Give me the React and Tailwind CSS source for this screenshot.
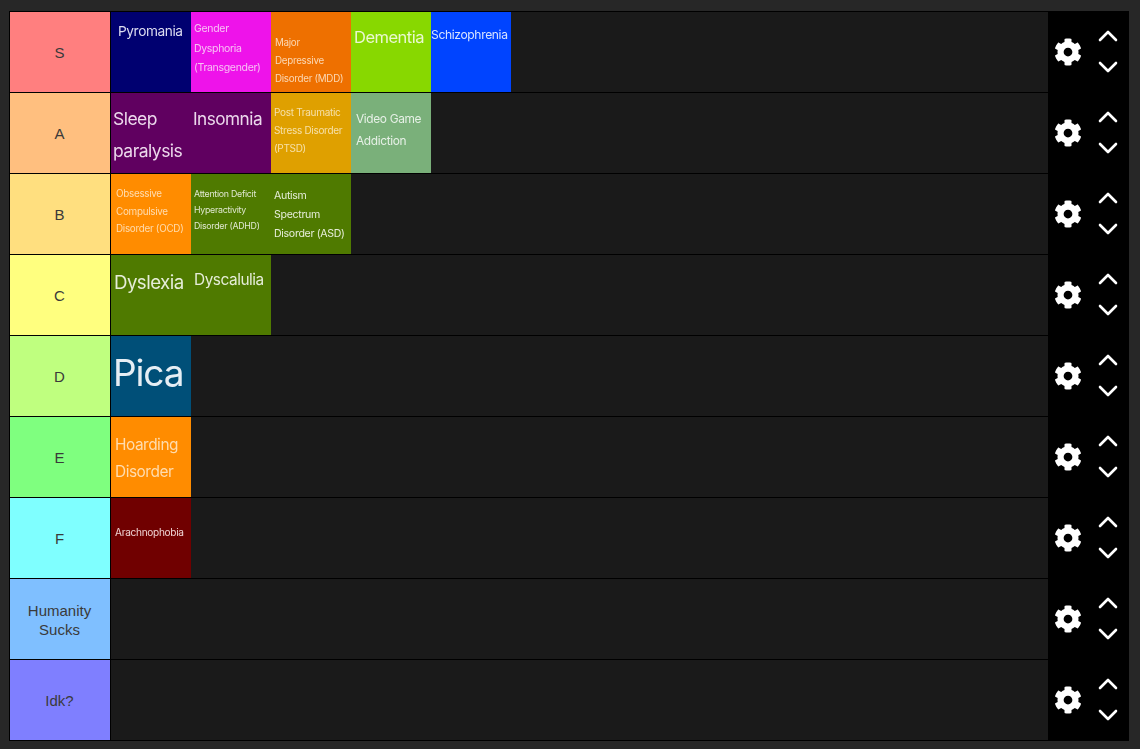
import React from "react";
import { FaCog } from "react-icons/fa";

const Tile = ({ bg, cls, lines }) => (
  <div className={`w-20 h-20 shrink-0 overflow-hidden whitespace-nowrap tracking-[-0.03em] ${bg} ${cls}`}>
    <div className="blur-[0.3px]">
      {lines.map((l) => (
        <div key={l}>{l}</div>
      ))}
    </div>
  </div>
);

const rows = [
  { label: ["S"], bg: "bg-[#ff7f7f]", tiles: [
    { bg: "bg-[#000070]", cls: "pl-[7px] pt-[10px] text-[13.7px] leading-[18px] text-[#dcdcf0]", lines: ["Pyromania"] },
    { bg: "bg-[#ee13ea]", cls: "pl-[3px] pt-[7px] text-[10.5px] leading-[19.5px] text-[#f8c0f4]", lines: ["Gender", "Dysphoria", "(Transgender)"] },
    { bg: "bg-[#ee7000]", cls: "pl-[4px] pt-[22px] text-[9.8px] leading-[18px] text-[#fbd8b4]", lines: ["Major", "Depressive", "Disorder (MDD)"] },
    { bg: "bg-[#88d800]", cls: "pl-[3px] pt-[12px] text-[16.5px] leading-[26px] text-[#eaf8d0]", lines: ["Dementia"] },
    { bg: "bg-[#0044ff]", cls: "pl-0 pt-[14px] text-[12.1px] leading-[18px] text-[#d8e4ff]", lines: ["Schizophrenia"] },
  ]},
  { label: ["A"], bg: "bg-[#ffbf7f]", tiles: [
    { bg: "bg-[#600060]", cls: "pl-[2px] pt-[10px] text-[17.5px] leading-[32px] text-[#ecd8ec]", lines: ["Sleep", "paralysis"] },
    { bg: "bg-[#600060]", cls: "pl-[2px] pt-[10px] text-[17.2px] leading-[32px] text-[#ecd8ec]", lines: ["Insomnia"] },
    { bg: "bg-[#dfa000]", cls: "pl-[3px] pt-[10px] text-[10px] leading-[18px] text-[#f6e0a8]", lines: ["Post Traumatic", "Stress Disorder", "(PTSD)"] },
    { bg: "bg-[#7ab07a]", cls: "pl-[5px] pt-[15px] text-[11.9px] leading-[22px] text-[#e6f0e6]", lines: ["Video Game", "Addiction"] },
  ]},
  { label: ["B"], bg: "bg-[#ffdf7f]", tiles: [
    { bg: "bg-[#ff8c00]", cls: "pl-[5px] pt-[11px] text-[9.9px] leading-[17.5px] text-[#ffdcae]", lines: ["Obsessive", "Compulsive", "Disorder (OCD)"] },
    { bg: "bg-[#4f7a00]", cls: "pl-[3px] pt-[12px] text-[8.8px] leading-[16px] text-[#e0e8d0]", lines: ["Attention Deficit", "Hyperactivity", "Disorder (ADHD)"] },
    { bg: "bg-[#4f7a00]", cls: "pl-[3px] pt-[12px] text-[10.6px] leading-[19px] text-[#e6edd8]", lines: ["Autism", "Spectrum", "Disorder (ASD)"] },
  ]},
  { label: ["C"], bg: "bg-[#ffff7f]", tiles: [
    { bg: "bg-[#4f7a00]", cls: "pl-[3px] pt-[15px] text-[18.7px] leading-[26px] text-[#e6edd8]", lines: ["Dyslexia"] },
    { bg: "bg-[#4f7a00]", cls: "pl-[3px] pt-[13px] text-[15.4px] leading-[24px] text-[#e6edd8]", lines: ["Dyscalulia"] },
  ]},
  { label: ["D"], bg: "bg-[#bfff7f]", tiles: [
    { bg: "bg-[#004f78]", cls: "pl-[2px] pt-[12px] text-[37px] leading-[50px] text-[#e6eef4]", lines: ["Pica"] },
  ]},
  { label: ["E"], bg: "bg-[#7fff7f]", tiles: [
    { bg: "bg-[#ff8c00]", cls: "pl-[4px] pt-[14px] text-[15.4px] leading-[27px] text-[#ffdcae]", lines: ["Hoarding", "Disorder"] },
  ]},
  { label: ["F"], bg: "bg-[#7fffff]", tiles: [
    { bg: "bg-[#700000]", cls: "pl-[4px] pt-[27px] text-[10.1px] leading-[14px] text-[#f0d4d4]", lines: ["Arachnophobia"] },
  ]},
  { label: ["Humanity", "Sucks"], bg: "bg-[#7fbfff]", tiles: [] },
  { label: ["Idk?"], bg: "bg-[#7f7fff]", tiles: [] },
];

const Chevron = ({ d }) => (
  <svg width="20" height="12" viewBox="0 0 20 12" fill="none" stroke="#ffffff" strokeWidth="2.6" strokeLinecap="round" strokeLinejoin="round">
    <path d={d} />
  </svg>
);

export default function App() {
  return (
    <div className="w-[1140px] h-[749px] bg-[#272727] pl-[9px] pt-[11px] overflow-hidden font-['Inter',sans-serif]">
      <div className="w-[1120px] h-[730px] border border-black border-r-0 border-b-0 bg-black flex flex-col">
        {rows.map((r, i) => (
          <div key={i} className={`flex h-20 shrink-0 ${i < rows.length - 1 ? "mb-px" : ""}`}>
            <div className={`w-[100px] shrink-0 mr-px pt-px pr-px flex items-center justify-center text-center text-[15px] leading-[19px] text-[#3a3a3a] font-['Liberation_Sans',sans-serif] ${r.bg}`}>
              <div>
                {r.label.map((l) => (
                  <div key={l}>{l}</div>
                ))}
              </div>
            </div>
            <div className="flex-1 flex bg-[#1a1a1a]">
              {r.tiles.map((t, j) => (
                <Tile key={j} {...t} />
              ))}
            </div>
            <div className="w-[81px] shrink-0 bg-black flex items-center">
              <div className="w-[40px] flex justify-center">
                <FaCog className="text-white" size={28} />
              </div>
              <div className="w-[40px] flex flex-col items-center gap-[19px] mb-[2px]">
                <Chevron d="M2 10 L10 2 L18 10" />
                <Chevron d="M2 2 L10 10 L18 2" />
              </div>
            </div>
          </div>
        ))}
      </div>
    </div>
  );
}
